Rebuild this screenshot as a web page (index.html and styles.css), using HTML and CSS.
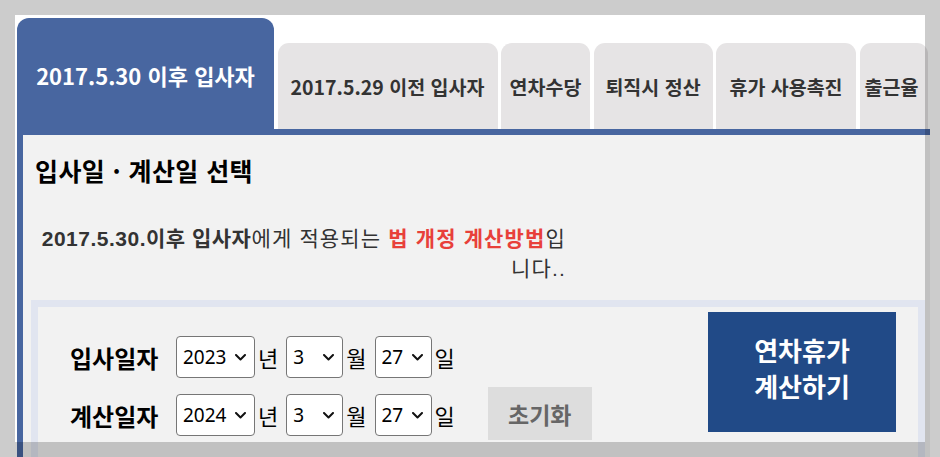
FILE: index.html
```html
<!DOCTYPE html>
<html lang="ko">
<head>
<meta charset="utf-8">
<title>연차휴가 계산기</title>
<link rel="stylesheet" href="styles.css">
</head>
<body>
<div class="page">
  <div class="tabs">
    <div class="tab tab-active">2017.5.30 이후 입사자</div>
    <div class="tab tab-w2">2017.5.29 이전 입사자</div>
    <div class="tab tab-w3">연차수당</div>
    <div class="tab tab-w4">퇴직시 정산</div>
    <div class="tab tab-w5">휴가 사용촉진</div>
    <div class="tab tab-w6">출근율</div>
  </div>
  <div class="panel">
    <h3 class="title">입사일 · 계산일 선택</h3>
    <p class="notice"><b class="strong">2017.5.30.이후 입사자</b>에게 적용되는 <b class="red">법 개정 계산방법</b>입<br>니다..</p>
    <div class="form-box">
      <div class="form-inner">
        <div class="rows">
          <div class="row">
            <span class="label">입사일자</span>
            <span class="sel-wrap"><select class="sel sel-year"><option>2023</option></select><svg class="chev" width="11" height="7" viewBox="0 0 11 7"><polyline points="1,1 5.5,5.5 10,1" fill="none" stroke="#111" stroke-width="2" stroke-linecap="round" stroke-linejoin="round"/></svg></span><span class="unit">년</span>
            <span class="sel-wrap"><select class="sel sel-small"><option>3</option></select><svg class="chev" width="11" height="7" viewBox="0 0 11 7"><polyline points="1,1 5.5,5.5 10,1" fill="none" stroke="#111" stroke-width="2" stroke-linecap="round" stroke-linejoin="round"/></svg></span><span class="unit">월</span>
            <span class="sel-wrap"><select class="sel sel-small"><option>27</option></select><svg class="chev" width="11" height="7" viewBox="0 0 11 7"><polyline points="1,1 5.5,5.5 10,1" fill="none" stroke="#111" stroke-width="2" stroke-linecap="round" stroke-linejoin="round"/></svg></span><span class="unit">일</span>
          </div>
          <div class="row">
            <span class="label">계산일자</span>
            <span class="sel-wrap"><select class="sel sel-year"><option>2024</option></select><svg class="chev" width="11" height="7" viewBox="0 0 11 7"><polyline points="1,1 5.5,5.5 10,1" fill="none" stroke="#111" stroke-width="2" stroke-linecap="round" stroke-linejoin="round"/></svg></span><span class="unit">년</span>
            <span class="sel-wrap"><select class="sel sel-small"><option>3</option></select><svg class="chev" width="11" height="7" viewBox="0 0 11 7"><polyline points="1,1 5.5,5.5 10,1" fill="none" stroke="#111" stroke-width="2" stroke-linecap="round" stroke-linejoin="round"/></svg></span><span class="unit">월</span>
            <span class="sel-wrap"><select class="sel sel-small"><option>27</option></select><svg class="chev" width="11" height="7" viewBox="0 0 11 7"><polyline points="1,1 5.5,5.5 10,1" fill="none" stroke="#111" stroke-width="2" stroke-linecap="round" stroke-linejoin="round"/></svg></span><span class="unit">일</span>
          </div>
        </div>
        <button class="reset">초기화</button>
        <button class="calc">연차휴가<br>계산하기</button>
      </div>
    </div>
  </div>
</div>
<div class="spotlight"></div>
</body>
</html>
```
FILE: styles.css
```css
html, body {
  margin: 0;
  padding: 0;
  overflow: hidden;
  background: #ffffff;
  font-family: "Noto Sans CJK KR", "Noto Sans", sans-serif;
}

.page {
  margin: 15px 0 0 15px;
  width: 913px;
  padding: 3px 0 0 2px;
  background: #ffffff;
}

.tabs {
  display: flex;
  align-items: flex-end;
  gap: 3.5px;
  height: 111px;
  overflow: hidden;
}

.tab {
  box-sizing: border-box;
  height: 86px;
  display: flex;
  align-items: center;
  justify-content: center;
  background: #e6e4e5;
  color: #333333;
  font-weight: bold;
  font-size: 19.5px;
  border-radius: 11px 11px 0 0;
  white-space: nowrap;
  flex: none;
}

.tab-active {
  width: 257px;
  height: 111px;
  background: #4866a0;
  color: #ffffff;
  font-size: 22px;
  border-radius: 12px 12px 0 0;
  padding-top: 3px;
}

.tab-w2 { width: 220px; }
.tab-w3 { width: 89px; }
.tab-w4 { width: 119px; }
.tab-w5 { width: 140px; }
.tab-w6 { width: 68px; justify-content: flex-start; padding-left: 5px; }

.panel {
  border-top: 6px solid #4866a0;
  border-left: 6px solid #4866a0;
  background: #f2f2f2;
  padding: 18px 5px 0 8px;
  height: 340px;
}

.title {
  margin: 0 0 0 4px;
  font-size: 25px;
  line-height: 34px;
  font-weight: bold;
  color: #000000;
  letter-spacing: 0.4px;
}

.notice {
  margin: 37px 0 0 0;
  width: 535px;
  text-align: right;
  font-family: "Liberation Sans", "Noto Sans CJK KR", sans-serif;
  font-size: 21px;
  line-height: 30px;
  color: #333333;
  letter-spacing: 1.15px;
}

.strong {
  color: #333333;
  letter-spacing: 0.5px;
}

.red {
  color: #e8403a;
}

.form-box {
  margin-top: 16px;
  border: 7px solid #e1e5f0;
  border-bottom: none;
  height: 200px;
}

.form-inner {
  display: flex;
  align-items: flex-start;
  padding: 5px 22px 0 32px;
}

.rows {
  margin-top: 24px;
  display: flex;
  flex-direction: column;
  gap: 16px;
}

.row {
  display: flex;
  align-items: center;
  height: 42px;
}

.label {
  font-size: 24px;
  font-weight: bold;
  color: #000000;
  width: 106px;
}

.sel-wrap {
  position: relative;
  display: flex;
}

.sel {
  box-sizing: border-box;
  height: 42px;
  font-family: "Noto Sans", sans-serif;
  font-size: 19px;
  color: #000000;
  background-color: #ffffff;
  border: 1px solid #767676;
  border-radius: 4px;
  padding: 0 0 0 6px;
  appearance: none;
  -webkit-appearance: none;
}

.chev {
  position: absolute;
  right: 9px;
  top: 18px;
  pointer-events: none;
}

.sel-year { width: 79px; }
.sel-small { width: 57px; }

.unit {
  font-size: 22px;
  color: #000000;
  margin: 0 8px 0 3px;
}

.reset {
  margin-top: 75px;
  margin-left: 25px;
  width: 104px;
  height: 53px;
  border: none;
  background: #dddddd;
  color: #666666;
  font-family: "Noto Sans CJK KR", sans-serif;
  font-size: 23px;
  font-weight: bold;
}

.calc {
  margin-left: auto;
  width: 188px;
  height: 120px;
  border: none;
  background: #214a87;
  color: #ffffff;
  font-family: "Noto Sans CJK KR", sans-serif;
  font-size: 26px;
  font-weight: bold;
  line-height: 36px;
  padding-bottom: 10px;
}

.spotlight {
  position: absolute;
  left: 15px;
  top: 15px;
  width: 910px;
  height: 427px;
  box-shadow: 0 0 0 2000px rgba(0, 0, 0, 0.2);
  pointer-events: none;
}
```
